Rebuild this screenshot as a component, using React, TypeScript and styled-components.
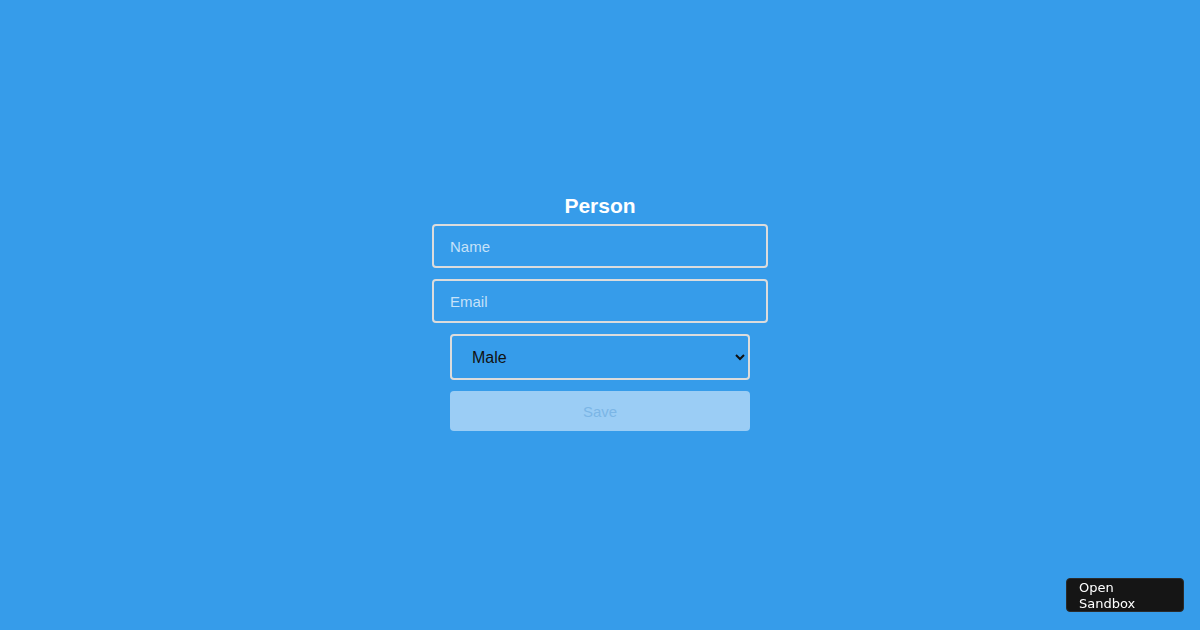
import styled, { createGlobalStyle } from 'styled-components'

const GlobalStyle = createGlobalStyle`
  html, body {
    margin: 0;
    padding: 0;
    background: #369cea;
    font-family: 'Liberation Sans', Arial, sans-serif;
  }
`

const Page = styled.div`
  min-height: 100vh;
  display: flex;
  flex-direction: column;
  align-items: center;
  justify-content: center;
`

const Form = styled.form`
  display: flex;
  flex-direction: column;
  align-items: center;
  margin-top: -5px;
`

const Title = styled.h2`
  margin: 0 0 7px;
  font-size: 21px;
  line-height: 23px;
  font-weight: bold;
  color: #fff;
`

const TextInput = styled.input`
  box-sizing: border-box;
  width: 336px;
  height: 44px;
  margin: 0 0 11px;
  padding: 1px 16px 0;
  border: 2px solid #dcdcdc;
  border-radius: 4px;
  background: transparent;
  font-family: 'Liberation Sans', Arial, sans-serif;
  font-size: 15px;
  color: #fff;
  outline: none;

  &::placeholder {
    color: rgba(255, 255, 255, 0.72);
    font-family: 'Liberation Sans', Arial, sans-serif;
  }
`

const Select = styled.select`
  box-sizing: border-box;
  width: 300px;
  height: 46px;
  margin: 0 0 11px;
  padding: 0 0 0 16px;
  border: 2px solid #dcdcdc;
  border-radius: 4px;
  background: transparent;
  font-family: 'Liberation Sans', Arial, sans-serif;
  font-size: 16px;
  color: #111;
  outline: none;
`

const SaveButton = styled.button`
  box-sizing: border-box;
  width: 300px;
  height: 40px;
  border: none;
  border-radius: 4px;
  background: #9bcdf5;
  font-family: 'Liberation Sans', Arial, sans-serif;
  font-size: 15px;
  color: #7bb6e6;
`

const SandboxLink = styled.a`
  position: fixed;
  right: 16px;
  bottom: 18px;
  box-sizing: border-box;
  width: 118px;
  height: 34px;
  padding: 1px 12px;
  background: #151515;
  border: 1px solid #2a2a2a;
  border-radius: 4px;
  font-family: 'DejaVu Sans', sans-serif;
  font-size: 13px;
  line-height: 16px;
  color: #fff;
  text-decoration: none;
  word-spacing: 40px;
`

const App = () => {
  return (
    <>
      <GlobalStyle />
      <Page>
        <Form onSubmit={(e) => e.preventDefault()}>
          <Title>Person</Title>
          <TextInput placeholder="Name" />
          <TextInput placeholder="Email" />
          <Select defaultValue="male">
            <option value="male">Male</option>
            <option value="female">Female</option>
          </Select>
          <SaveButton disabled>Save</SaveButton>
        </Form>
      </Page>
      <SandboxLink href="#">Open Sandbox</SandboxLink>
    </>
  )
}

export default App
